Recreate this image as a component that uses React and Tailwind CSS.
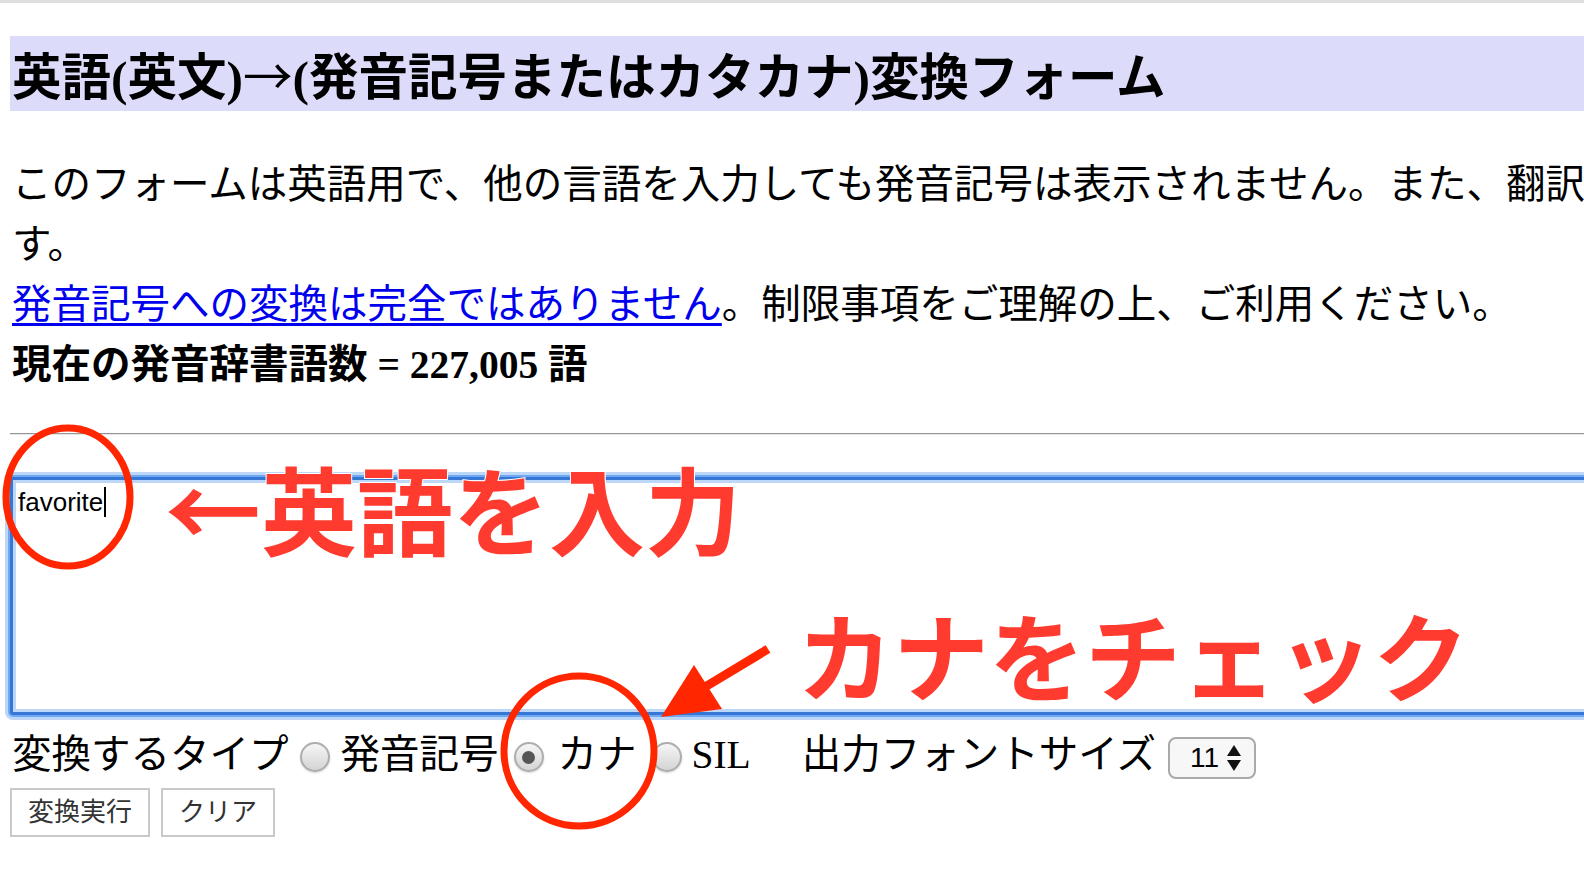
import React from 'react';

const serif = "font-['Liberation_Serif','Noto_Sans_CJK_JP',serif]";
const sans = "font-['Liberation_Sans','Noto_Sans_CJK_JP',sans-serif]";

function Radio({ checked }) {
  return (
    <span className="flex h-[30px] w-[30px] shrink-0 items-center justify-center rounded-full border-2 border-[#adadad] bg-gradient-to-b from-[#f6f6f6] to-[#d4d4d4] shadow-[0_1px_2px_rgba(0,0,0,0.18)]">
      {checked && <span className="h-[13px] w-[13px] rounded-full bg-[#555]" />}
    </span>
  );
}

function SizeSelect() {
  return (
    <span
      className={`ml-[12px] mt-[6px] flex h-[42px] w-[88px] items-center justify-between rounded-[8px] border-2 border-[#a9a9a9] bg-[#f7f7f7] pl-[20px] pr-[12px] text-[28px] text-black ${sans}`}
    >
      11
      <svg width="16" height="30" viewBox="0 0 16 30">
        <path d="M8 2 L15 13 L1 13 Z" fill="#111" />
        <path d="M1 17 L15 17 L8 28 Z" fill="#111" />
      </svg>
    </span>
  );
}

export default function App() {
  return (
    <div className="relative h-[872px] w-full overflow-hidden border-t-[3px] border-[#dedede] bg-white text-black">
      <div className={`w-[1700px] pl-[10px] ${serif}`}>
        {/* Title */}
        <h1 className="mt-[33px] h-[75px] whitespace-nowrap bg-[#dcdcfa] pl-[2px] text-[49.5px] font-bold leading-[75px]">
          英語(英文)<span className="font-['Noto_Sans_CJK_JP',serif] font-normal">→</span>(発音記号またはカタカナ)変換フォーム
        </h1>

        {/* Notes */}
        <div className="mt-[44px] pl-[2px] text-[39.5px] leading-[60px]">
          <p className="whitespace-nowrap">
            このフォームは英語用で、他の言語を入力しても発音記号は表示されません。また、翻訳機能はありませんのでご注意くださいま
          </p>
          <p>す。</p>
          <p className="whitespace-nowrap">
            <a href="#" className="text-[#0000ee] underline decoration-[3px] underline-offset-[5px]">
              発音記号への変換は完全ではありません
            </a>
            。制限事項をご理解の上、ご利用ください。
          </p>
          <p className="whitespace-nowrap font-bold">現在の発音辞書語数 = 227,005 語</p>
        </div>

        <hr className="mt-[38px] h-[2px] border-0 border-b border-b-[#e6e6e6] bg-[#969696]" />

        {/* Input area */}
        <div className="mt-[42px] h-[238px] rounded-[3px] border-[3px] border-[#3676d4] bg-white px-[5px] pt-[5px] shadow-[inset_0_0_0_3px_#bcd7f8,0_0_0_2px_#6ea8f2,0_0_0_5px_#bcd7f8]">
          <span className={`inline-flex items-center text-[26px] leading-[34px] ${sans}`}>
            favorite
            <span className="ml-[1px] h-[30px] w-[1.5px] bg-black" />
          </span>
        </div>

        {/* Options */}
        <div className="mt-[10px] flex h-[60px] items-center pl-[2px] text-[39.5px] leading-[60px]">
          <span>変換するタイプ</span>
          <span className="ml-[11px] mt-[4px]">
            <Radio />
          </span>
          <span className="ml-[11px]">発音記号</span>
          <span className="ml-[15px] mt-[4px]">
            <Radio checked />
          </span>
          <span className="ml-[14px]">カナ</span>
          <span className="ml-[15px] mt-[4px]">
            <Radio />
          </span>
          <span className="ml-[10px]">SIL</span>
          <span className="ml-[51px]">出力フォントサイズ</span>
          <SizeSelect />
        </div>

        {/* Buttons */}
        <div className={`mt-[3px] flex gap-[11px] text-[26px] text-[#333] ${sans}`}>
          <button className="h-[49px] w-[140px] border-2 border-[#c9c9c9] bg-white">変換実行</button>
          <button className="h-[49px] w-[114px] border-2 border-[#c9c9c9] bg-white">クリア</button>
        </div>
      </div>

      {/* Annotations */}
      <svg className="pointer-events-none absolute left-0 top-0" width="1584" height="872">
        <ellipse cx="68" cy="494" rx="62" ry="69" fill="none" stroke="#ff2600" strokeWidth="7" />
        <ellipse cx="579" cy="748" rx="75" ry="75" fill="none" stroke="#ff2600" strokeWidth="7" />
        <line x1="768" y1="646" x2="705" y2="684" stroke="#ff2600" strokeWidth="9" />
        <path d="M661 714 L694 662 L722 706 Z" fill="#ff2600" />
      </svg>
      <div className="pointer-events-none absolute left-[165px] top-[456px] whitespace-nowrap font-['Noto_Sans_CJK_JP',sans-serif] text-[96px] font-bold leading-none text-[#ff3b30] [-webkit-text-stroke:2px_white] [paint-order:stroke_fill]">
        ←英語を入力
      </div>
      <div className="pointer-events-none absolute left-[797px] top-[602px] whitespace-nowrap font-['Noto_Sans_CJK_JP',sans-serif] text-[96px] font-bold leading-none text-[#ff3b30] [-webkit-text-stroke:2px_white] [paint-order:stroke_fill]">
        カナをチェック
      </div>
    </div>
  );
}
